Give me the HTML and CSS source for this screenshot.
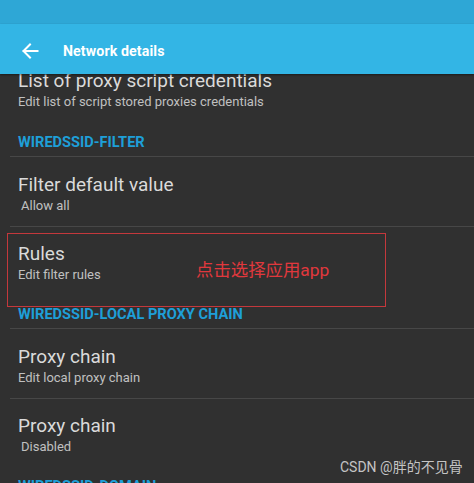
FILE: index.html
```html
<!DOCTYPE html>
<html>
<head>
<meta charset="utf-8">
<link rel="stylesheet" href="styles.css">
</head>
<body>
<div class="screen">
  <div class="statusbar"></div>
  <div class="appbar">
    <svg class="back" width="18" height="18" viewBox="0 0 18 18"><path d="M16.5 9H2.5M9 2.5L2.5 9L9 15.5" fill="none" stroke="#fff" stroke-width="2" stroke-linecap="square"/></svg>
    <div class="apptitle">Network details</div>
  </div>
  <div class="content">
    <div class="list">
      <div class="item">
        <div class="title">List of proxy script credentials</div>
        <div class="sub">Edit list of script stored proxies credentials</div>
      </div>
      <div class="header">WIREDSSID-FILTER</div>
      <div class="item divided">
        <div class="title">Filter default value</div>
        <div class="sub indent">Allow all</div>
      </div>
      <div class="item">
        <div class="title">Rules</div>
        <div class="sub">Edit filter rules</div>
      </div>
      <div class="header">WIREDSSID-LOCAL PROXY CHAIN</div>
      <div class="item divided">
        <div class="title">Proxy chain</div>
        <div class="sub">Edit local proxy chain</div>
      </div>
      <div class="item">
        <div class="title">Proxy chain</div>
        <div class="sub indent">Disabled</div>
      </div>
      <div class="header">WIREDSSID-DOMAIN</div>
    </div>
  </div>
  <div class="mark-box"></div>
  <div class="mark-text">点击选择应用app</div>
  <div class="watermark">CSDN @胖的不见骨</div>
</div>
</body>
</html>
```

FILE: styles.css
```css
* { box-sizing: border-box; }
html, body { margin: 0; padding: 0; }
body {
  background: #303030;
  font-family: Roboto, "Noto Sans CJK SC", sans-serif;
}
.screen {
  position: relative;
  width: 474px;
  height: 483px;
  display: flex;
  flex-direction: column;
  overflow: hidden;
  background: #303030;
}
.statusbar {
  height: 24px;
  flex: none;
  background: #2ea7d6;
}
.appbar {
  height: 50px;
  flex: none;
  background: #33b5e5;
  display: flex;
  align-items: center;
  padding: 3px 0 0 21px;
  box-shadow: 0 1px 2px rgba(0,0,0,0.45);
  position: relative;
  z-index: 1;
}
.back { display: block; }
.apptitle {
  margin-left: 24px;
  color: #fff;
  font-size: 14.2px;
  font-weight: 700;
  letter-spacing: 0.1px;
}
.content {
  flex: 1;
  overflow: hidden;
}
.list {
  margin-top: -20px;
}
.item {
  height: 69px;
  padding: 14px 0 0 18px;
}
.list > .item:first-child {
  height: 70px;
}
.item.divided {
  height: 70px;
  padding-top: 15px;
  border-bottom: 1px solid #474747;
  margin-left: 10px;
  padding-left: 8px;
}
.title {
  font-size: 19px;
  line-height: 25px;
  color: #dadada;
}
.sub {
  font-size: 13px;
  line-height: 18px;
  color: #c0c0c0;
}
.sub.indent { padding-left: 3px; }
.header {
  height: 33px;
  margin-left: 10px;
  padding: 10px 0 0 8px;
  border-bottom: 1px solid #474747;
  font-size: 14.6px;
  line-height: 16px;
  font-weight: 700;
  color: #1e9fd8;
}
.mark-box {
  position: absolute;
  left: 7px;
  top: 233px;
  width: 379px;
  height: 74px;
  border: 1px solid #c4383c;
}
.mark-text {
  position: absolute;
  left: 196px;
  top: 259px;
  font-size: 17.4px;
  line-height: 22px;
  color: #e0383d;
}
.watermark {
  position: absolute;
  left: 340px;
  top: 458px;
  font-size: 14px;
  line-height: 18px;
  color: #c4c4c4;
}
```
